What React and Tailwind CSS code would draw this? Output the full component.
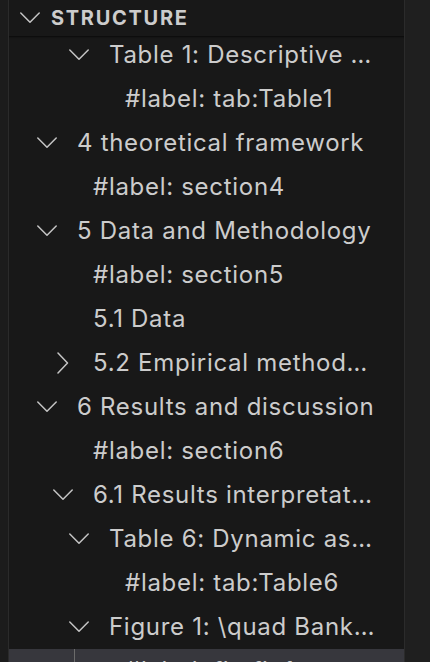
import React from "react";

const rows = [
  { pl: "pl-[60px]", icon: "down", text: "Table 1: Descriptive …" },
  { pl: "pl-[76px]", icon: null, text: "#label: tab:Table1" },
  { pl: "pl-[28px]", icon: "down", text: "4 theoretical framework" },
  { pl: "pl-[44px]", icon: null, text: "#label: section4" },
  { pl: "pl-[28px]", icon: "down", text: "5 Data and Methodology" },
  { pl: "pl-[44px]", icon: null, text: "#label: section5" },
  { pl: "pl-[44px]", icon: null, text: "5.1 Data" },
  { pl: "pl-[44px]", icon: "right", text: "5.2 Empirical method…" },
  { pl: "pl-[28px]", icon: "down", text: "6 Results and discussion" },
  { pl: "pl-[44px]", icon: null, text: "#label: section6" },
  { pl: "pl-[44px]", icon: "down", text: "6.1 Results interpretat…" },
  { pl: "pl-[60px]", icon: "down", text: "Table 6: Dynamic as…" },
  { pl: "pl-[76px]", icon: null, text: "#label: tab:Table6" },
  { pl: "pl-[60px]", icon: "down", text: "Figure 1: \\quad Bank…" },
  { pl: "pl-[76px]", icon: null, text: "#label: fig:fig1", selected: true },
];

function ChevronDown() {
  return (
    <svg width="20" height="20" viewBox="0 0 20 20" fill="none">
      <path d="M0.8 5 L10 14.2 L19.2 5" stroke="#c5c5c5" strokeWidth="1.5" strokeLinecap="round" strokeLinejoin="round" />
    </svg>
  );
}

function ChevronRight() {
  return (
    <svg width="20" height="22" viewBox="0 0 20 22" fill="none">
      <path d="M5 1 L14.5 11 L5 21" stroke="#c5c5c5" strokeWidth="1.5" strokeLinecap="round" strokeLinejoin="round" />
    </svg>
  );
}

export default function App() {
  return (
    <div
      className="flex h-[662px] w-[430px] overflow-hidden bg-[#181818] text-[#cccccc]"
      style={{ fontFamily: "Inter, 'Noto Sans', sans-serif" }}
    >
      <div className="w-[8px] shrink-0 bg-[#1c1c1c]" />
      <div className="w-[1px] shrink-0 bg-[#2b2b2b]" />
      <div className="flex w-[395px] shrink-0 flex-col bg-[#181818]">
        <div className="flex h-[36px] shrink-0 items-center pl-[11px]">
          <div className="flex w-[20px] items-center justify-center">
            <ChevronDown />
          </div>
          <span className="ml-[11px] text-[20px] font-bold tracking-[1.7px] text-[#cccccc]">
            STRUCTURE
          </span>
        </div>
        <div className="relative flex-1 overflow-hidden">
          <div className="pointer-events-none absolute inset-x-0 top-0 z-10 h-[3px] shadow-[inset_0_2px_2px_-1px_rgba(0,0,0,0.6)]" />
          <div className="-mt-[3px] flex flex-col">
            {rows.map((r, i) => (
              <div
                key={i}
                className={
                  "relative flex h-[44px] shrink-0 items-center " +
                  r.pl +
                  (r.selected ? " bg-[#37373d]" : "")
                }
              >
                {r.selected && (
                  <div className="absolute left-[65px] top-0 h-full w-[1px] bg-[#6b6b6b]" />
                )}
                <div className="flex h-[22px] w-[20px] shrink-0 items-center justify-center">
                  {r.icon === "down" && <ChevronDown />}
                  {r.icon === "right" && <ChevronRight />}
                </div>
                <span className="ml-[20px] whitespace-nowrap text-[24px] leading-none tracking-[0.7px] text-[#cccccc]">
                  {r.text}
                </span>
              </div>
            ))}
          </div>
        </div>
      </div>
      <div className="w-[1px] shrink-0 bg-[#2b2b2b]" />
      <div className="flex-1 bg-[#1f1f1f]" />
    </div>
  );
}
